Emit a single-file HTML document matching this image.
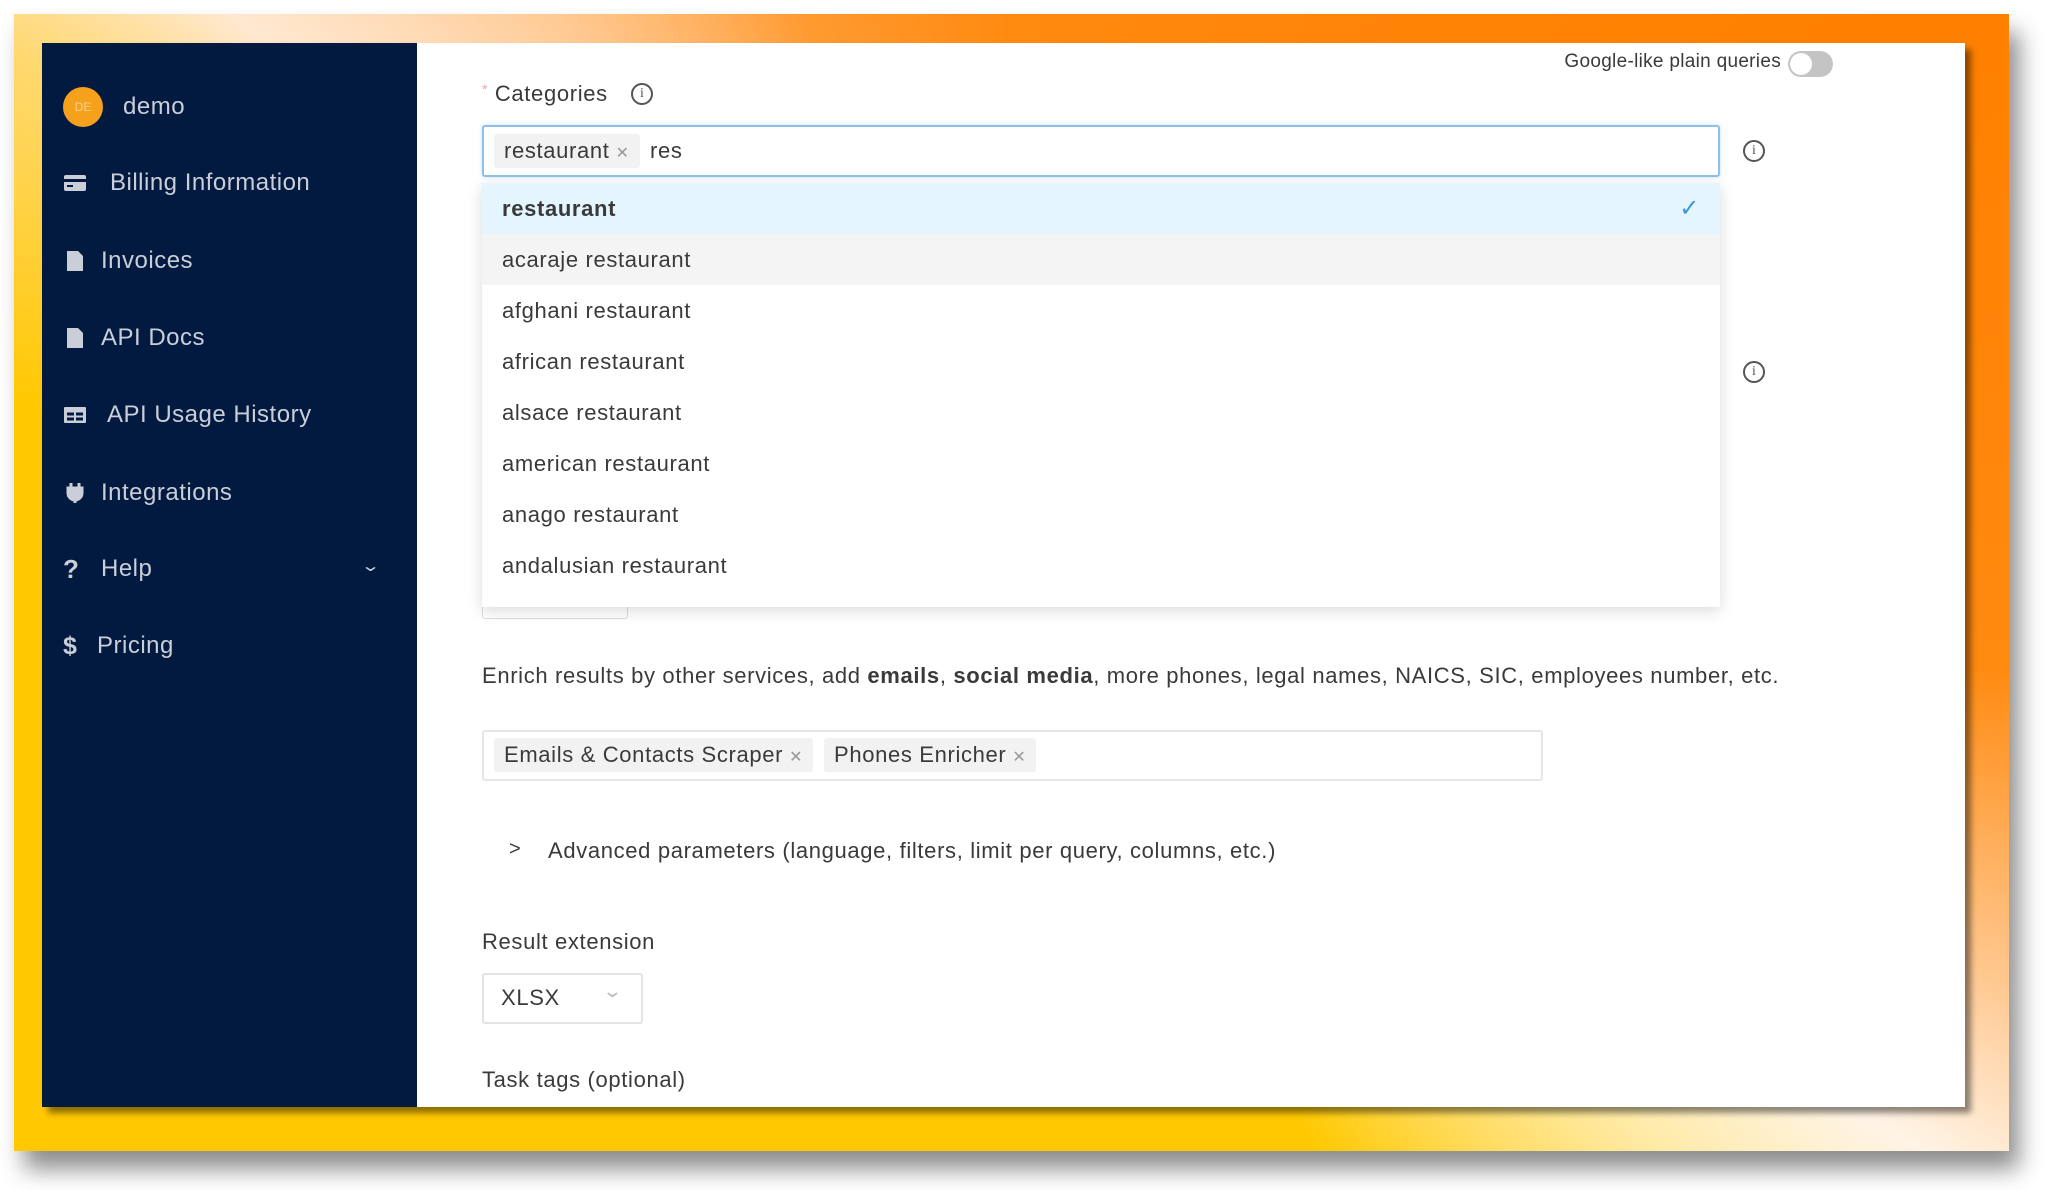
<!DOCTYPE html>
<html><head><meta charset="utf-8"><style>
*{box-sizing:border-box;margin:0;padding:0}
body{width:2048px;height:1190px;background:#fff;position:relative;overflow:hidden;font-family:"Liberation Sans",sans-serif}
.frame{position:absolute;left:14px;top:14px;width:1995px;height:1137px;
background:conic-gradient(from 0deg at 50% 50%,#ff8a10 0deg,#ff8000 60deg,#ff8a10 95deg,#ffc890 112deg,#fff4e6 122deg,#ffe9a0 132deg,#ffc800 152deg,#ffc800 280deg,#ffd870 298deg,#ffe8d0 306deg,#ffc890 322deg,#ff9a30 340deg,#ff8a10 360deg);
box-shadow:10px 18px 22px rgba(0,0,0,.45)}
.shot{position:absolute;left:42px;top:43px;width:1923px;height:1064px;background:#fff;box-shadow:6px 6px 6px rgba(0,0,0,.45)}
.side{position:absolute;left:0;top:0;width:375px;height:1064px;background:#031a40}
.si{position:absolute;left:0;color:#c9ced8;font-size:24px;letter-spacing:.5px;height:30px;line-height:30px;white-space:nowrap}
.ic{position:absolute;left:21px;top:5px;width:24px;height:20px}
.c{position:absolute;color:#3a3a3a;font-size:22px;letter-spacing:.65px;white-space:nowrap}
.info{position:absolute;width:22px;height:22px;border:2px solid #555;border-radius:50%;font-size:14px;line-height:18px;text-align:center;color:#555;font-family:"Liberation Serif",serif}
.tag{position:absolute;background:#f2f2f2;border-radius:3px;height:34px;line-height:34px;padding:0 10px;font-size:22px;letter-spacing:.65px;color:#3a3a3a;white-space:nowrap}
.tag i{font-style:normal;color:#999;font-size:16px;margin-left:6px}
.dd{position:absolute;left:440px;top:140px;width:1238px;height:424px;background:#fff;box-shadow:0 4px 14px rgba(0,0,0,.15)}
.it{height:51px;line-height:51px;padding-left:20px;font-size:22px;letter-spacing:.65px;color:#3a3a3a}
</style></head><body>
<div class="frame"></div>
<div class="shot">
 <div class="side">
  <div style="position:absolute;left:21px;top:44px;width:40px;height:40px;border-radius:50%;background:#f5a11c;color:#ffd28a;font-size:12px;line-height:40px;text-align:center">DE</div>
  <div class="si" style="left:81px;top:49px">demo</div>
  <div class="si" style="top:125px"><svg class="ic" viewBox="0 0 24 20"><rect x="1" y="2" width="22" height="16" rx="2" fill="#c9ced8"/><rect x="1" y="6" width="22" height="3" fill="#031a40"/><rect x="4" y="12" width="6" height="2" fill="#031a40"/></svg><span style="margin-left:68px">Billing Information</span></div>
  <div class="si" style="top:203px"><svg class="ic" viewBox="0 0 24 20"><path d="M4 0h11l5 5v15H4z" fill="#c9ced8"/></svg><span style="margin-left:59px">Invoices</span></div>
  <div class="si" style="top:280px"><svg class="ic" viewBox="0 0 24 20"><path d="M4 0h11l5 5v15H4z" fill="#c9ced8"/></svg><span style="margin-left:59px">API Docs</span></div>
  <div class="si" style="top:357px"><svg class="ic" viewBox="0 0 24 20"><rect x="1" y="2" width="22" height="16" rx="1" fill="#c9ced8"/><path d="M4 9h7M13 9h7M4 14h7M13 14h7" stroke="#031a40" stroke-width="3"/></svg><span style="margin-left:65px">API Usage History</span></div>
  <div class="si" style="top:435px"><svg class="ic" viewBox="0 0 24 20"><path d="M8 0v5M16 0v5M5 5h14v5a7 7 0 0 1-14 0zM12 16v4" stroke="#c9ced8" stroke-width="3" fill="#c9ced8"/></svg><span style="margin-left:59px">Integrations</span></div>
  <div class="si" style="top:511px"><span style="position:absolute;left:21px;font-weight:bold;font-size:26px">?</span><span style="margin-left:59px">Help</span><span style="position:absolute;left:322px;top:-2px;font-size:16px;transform:scaleX(1.5)">&#8964;</span></div>
  <div class="si" style="top:588px"><span style="position:absolute;left:21px;font-weight:bold;font-size:25px">$</span><span style="margin-left:55px">Pricing</span></div>
 </div>
 <div class="c" style="right:184px;top:8px;font-size:19px;letter-spacing:.3px">Google-like plain queries</div>
 <div style="position:absolute;left:1746px;top:8px;width:45px;height:26px;border-radius:13px;background:#c4c4c4"><div style="position:absolute;left:2px;top:2px;width:22px;height:22px;border-radius:50%;background:#fff"></div></div>
 <div class="c" style="left:440px;top:38px"><span style="color:#f5a0a0;font-size:14px;vertical-align:top">*</span> Categories</div>
 <div class="info" style="left:589px;top:40px">i</div>
 <div style="position:absolute;left:440px;top:82px;width:1238px;height:52px;border:2px solid #8fc0e6;border-radius:3px;box-shadow:0 0 4px rgba(24,144,255,.25)"></div>
 <div class="tag" style="left:452px;top:91px">restaurant<i>✕</i></div>
 <div class="c" style="left:608px;top:95px">res</div>
 <div class="info" style="left:1701px;top:97px">i</div>
 <div class="info" style="left:1701px;top:318px">i</div>
 <div style="position:absolute;left:440px;top:520px;width:146px;height:56px;border:1px solid #ddd;border-radius:3px"></div>
 <div class="dd">
  <div class="it" style="background:#e4f5fd;font-weight:bold;position:relative">restaurant<span style="position:absolute;right:20px;color:#3f95d4;font-weight:normal;font-size:24px">✓</span></div>
  <div class="it" style="background:#f4f4f4">acaraje restaurant</div>
  <div class="it">afghani restaurant</div>
  <div class="it">african restaurant</div>
  <div class="it">alsace restaurant</div>
  <div class="it">american restaurant</div>
  <div class="it">anago restaurant</div>
  <div class="it">andalusian restaurant</div>
 </div>
 <div class="c" style="left:440px;top:620px">Enrich results by other services, add <b>emails</b>, <b>social media</b>, more phones, legal names, NAICS, SIC, employees number, etc.</div>
 <div style="position:absolute;left:440px;top:687px;width:1061px;height:51px;border:2px solid #e6e6e6;border-radius:3px"></div>
 <div class="tag" style="left:452px;top:695px">Emails &amp; Contacts Scraper<i>✕</i></div>
 <div class="tag" style="left:782px;top:695px">Phones Enricher<i>✕</i></div>
 <div class="c" style="left:467px;top:795px;font-size:20px">&gt;</div>
 <div class="c" style="left:506px;top:795px">Advanced parameters (language, filters, limit per query, columns, etc.)</div>
 <div class="c" style="left:440px;top:886px">Result extension</div>
 <div style="position:absolute;left:440px;top:930px;width:161px;height:51px;border:2px solid #e3e3e3;border-radius:3px"></div>
 <div class="c" style="left:459px;top:942px">XLSX</div>
 <div class="c" style="left:563px;top:938px;color:#bbb;font-size:18px;transform:scaleX(1.4)">&#8964;</div>
 <div class="c" style="left:440px;top:1024px">Task tags (optional)</div>
</div>
</body></html>
